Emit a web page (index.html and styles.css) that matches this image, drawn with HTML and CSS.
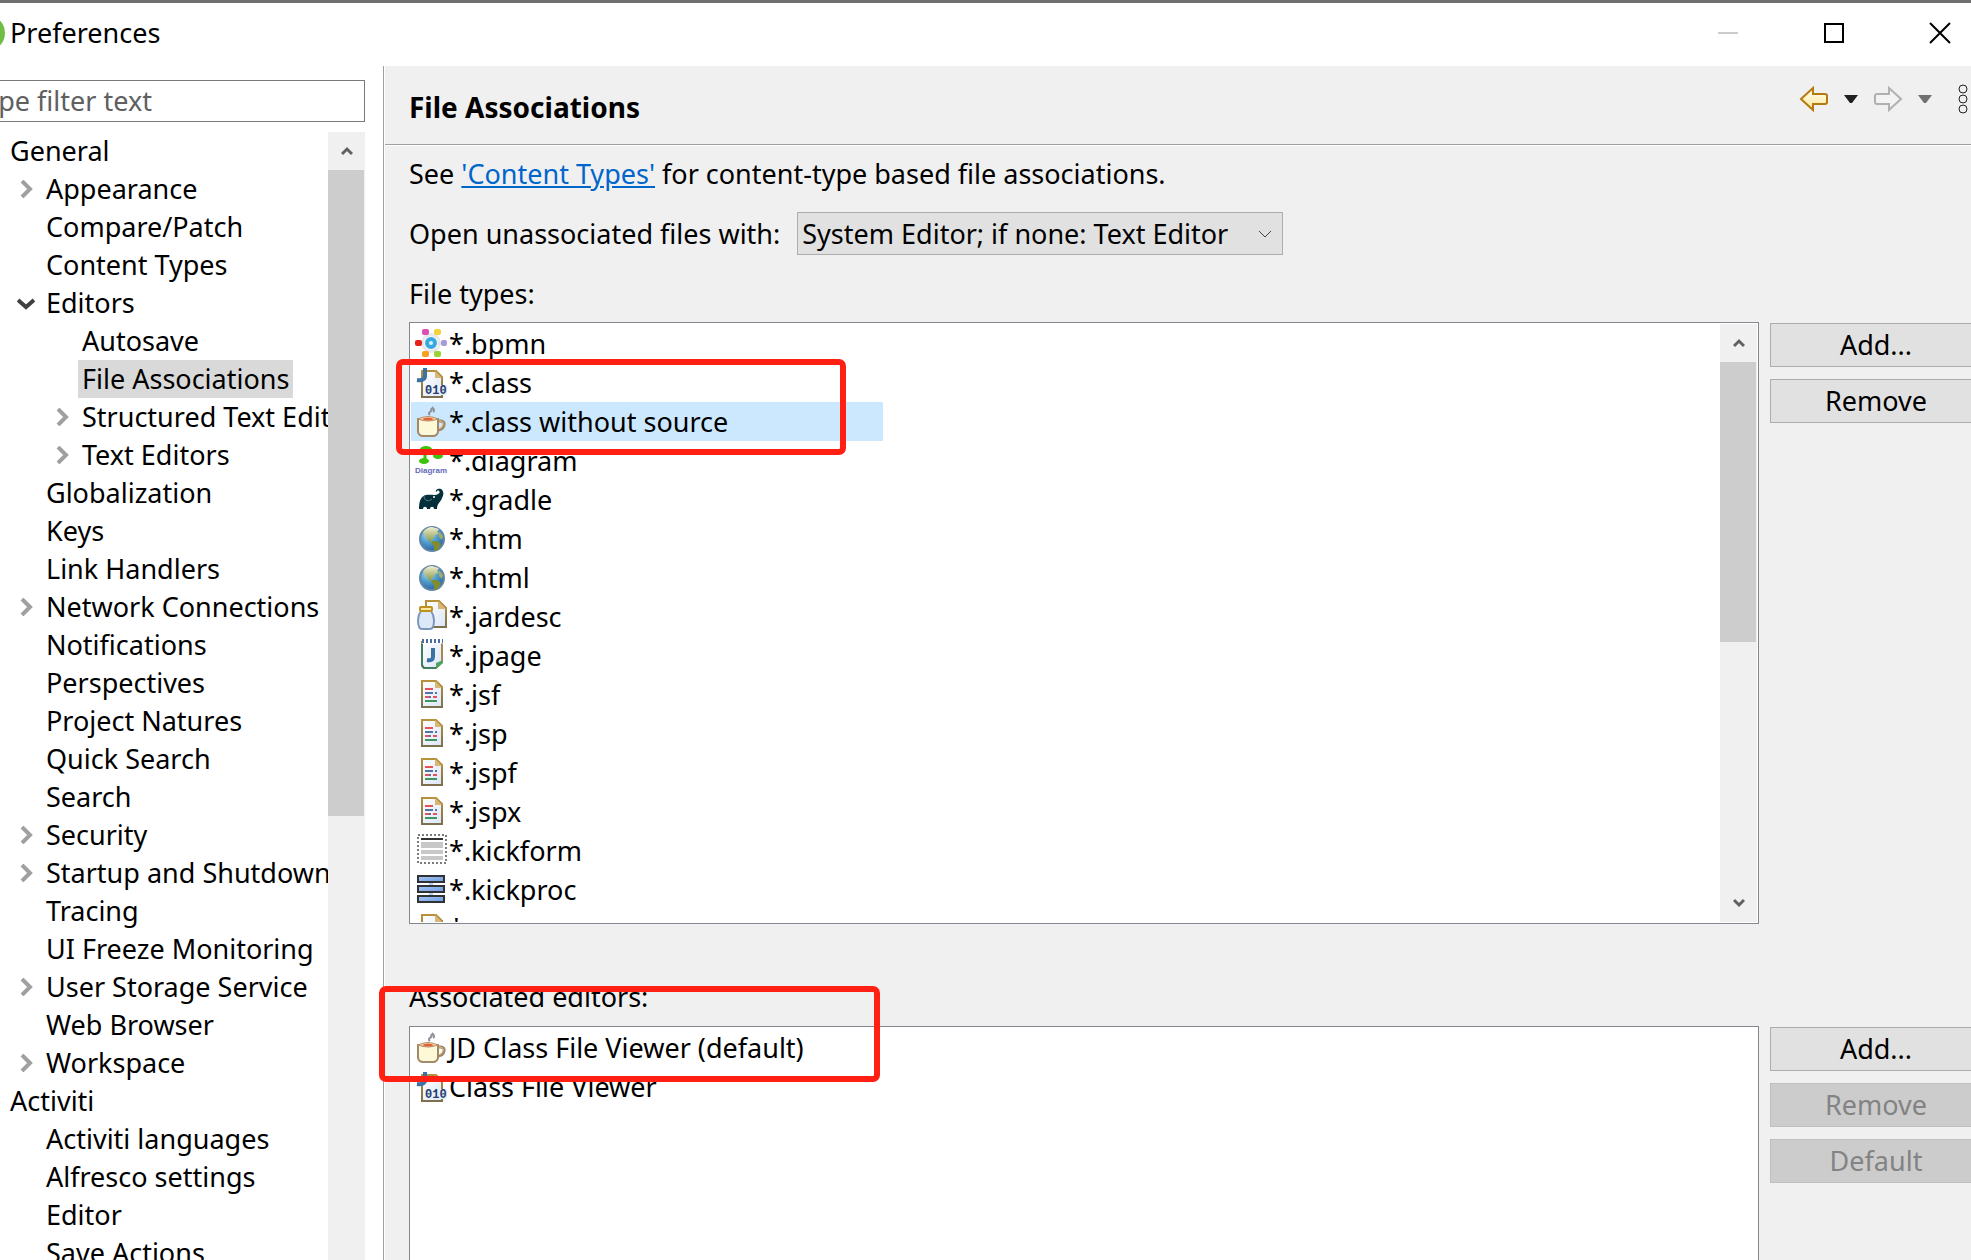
FILE: index.html
```html
<!DOCTYPE html>
<html lang="en">
<head>
  <meta charset="UTF-8">
  <title>Preferences</title>
  <link rel="stylesheet" href="styles.css">
</head>
<body>

<!-- Icons used by the lists -->
<svg class="sprite" width="0" height="0" aria-hidden="true">
  <defs>
    <linearGradient id="pageFill" x1="0" y1="0" x2="1" y2="1">
      <stop offset="0" stop-color="#ffffff"/><stop offset="1" stop-color="#dbe6f8"/>
    </linearGradient>
    <linearGradient id="pageEdge" x1="0" y1="0" x2="0" y2="1">
      <stop offset="0" stop-color="#b8923a"/><stop offset="1" stop-color="#7c704e"/>
    </linearGradient>
    <radialGradient id="sea" cx="0.35" cy="0.25" r="0.8">
      <stop offset="0" stop-color="#bfe3ee"/><stop offset="0.5" stop-color="#4f9fd0"/><stop offset="1" stop-color="#2b5d9c"/>
    </radialGradient>
    <linearGradient id="land" x1="0" y1="0" x2="0" y2="1">
      <stop offset="0" stop-color="#eeeed2"/><stop offset="1" stop-color="#7d8a2c"/>
    </linearGradient>
    <linearGradient id="backFill" x1="0" y1="0" x2="0" y2="1">
      <stop offset="0" stop-color="#fffdf0"/><stop offset="1" stop-color="#fde79a"/>
    </linearGradient>
    <linearGradient id="barFill" x1="0" y1="0" x2="1" y2="1">
      <stop offset="0" stop-color="#a9c6f2"/><stop offset="1" stop-color="#6c9ce0"/>
    </linearGradient>
  </defs>

  <symbol id="i-bpmn" viewBox="0 0 30 30" overflow="visible">
    <circle cx="14" cy="14" r="10" fill="#e9e9ec"/>
    <path d="M0 14h28M8 4l12 21M20 4L8 25" stroke="#e4e4e8" stroke-width="3"/>
    <circle cx="14" cy="14" r="7" fill="#f4f8fa"/>
    <circle cx="14" cy="14" r="4" fill="#d9f3fd" stroke="#35a9e0" stroke-width="4"/>
    <rect x="5" y="0" width="7" height="6" rx="2" fill="#dd4fb4"/>
    <rect x="17" y="0" width="7" height="6" rx="2" fill="#f3d23a"/>
    <rect x="-2" y="11" width="7" height="6" rx="2" fill="#e8201c"/>
    <rect x="24" y="11" width="6" height="6" rx="2" fill="#a69bd8"/>
    <rect x="5" y="22" width="7" height="6" rx="2" fill="#f9a01e"/>
    <rect x="17" y="22" width="7" height="6" rx="2" fill="#9bd335"/>
  </symbol>

  <symbol id="i-class" viewBox="0 0 30 30" overflow="visible">
    <path d="M5 3h14l6 6v20H5z" fill="url(#pageFill)" stroke="url(#pageEdge)" stroke-width="2"/>
    <path d="M18 3v7h7z" fill="#d9b877"/>
    <rect x="8" y="17" width="22" height="10" fill="#eaf0fa"/>
    <path d="M8 0v8q0 5-8 4" fill="none" stroke="#3a72a6" stroke-width="4"/>
    <text x="8" y="26" class="icon-bits">010</text>
  </symbol>

  <symbol id="i-cup" viewBox="0 0 30 30" overflow="visible">
    <path d="M13 8c-4-3 4-3 1-7M16 5c2-1 1-3-1-5" fill="none" stroke="#8e949b" stroke-width="2"/>
    <path d="M20 14h4q4 1 3 4-1 5-7 5" fill="none" stroke="#9c8668" stroke-width="3"/>
    <path d="M20 14h4q3 1 2 4-1 4-6 4" fill="none" stroke="#e6c08c" stroke-width="1"/>
    <path d="M1 12v13q1 4 5 4h10q4 0 5-4V12z" fill="#fdf8d8" stroke="#a08a68" stroke-width="2"/>
    <path d="M1 12q10-5 20 0-10 4-20 0z" fill="#f8dcb4" stroke="#b99068"/>
    <path d="M5 12q6-3 12 0-6 3-12 0z" fill="#e0623a"/>
  </symbol>

  <symbol id="i-diagram" viewBox="0 0 30 30" overflow="visible">
    <path d="M8 3v12M10 4l10 5" stroke="#3cc40a" stroke-width="3"/>
    <ellipse cx="9" cy="3" rx="6" ry="3" fill="#3cc40a"/>
    <ellipse cx="7" cy="15" rx="5" ry="3" fill="#3cc40a"/>
    <ellipse cx="21" cy="10" rx="5" ry="3" fill="#3cc40a"/>
    <text x="-2" y="27" class="icon-caption">Diagram</text>
  </symbol>

  <symbol id="i-gradle" viewBox="0 0 30 30" overflow="visible">
    <path d="M2 24c0-8 2-13 7-14 4-1 9 1 12-1 2-1 2-2 1-3-1-1-2 0-3 1-1-2 2-4 5-3 3 2 3 6 1 9-1 4-5 5-5 11h-3c0-3-4-3-4 0h-3c0-3-4-3-4 0z" fill="#02303a"/>
    <path d="M7 11c0 5 5 6 8 3" fill="none" stroke="#5d7c84"/>
    <circle cx="17" cy="12" r="1" fill="#ffffff"/>
  </symbol>

  <symbol id="i-globe" viewBox="0 0 30 30" overflow="visible">
    <circle cx="15" cy="15" r="12" fill="url(#sea)" stroke="#5f86a8" stroke-width="2"/>
    <path d="M6 8q4-5 9-5l7 2-2 3 2 2-4 1-2 4-2 0 1 3 2 1-1 1-5-4-3-5z" fill="url(#land)"/>
    <path d="M15 17l5 0 4 3-2 4-3 3-2-1 0-4-2-2z" fill="#7f8c30"/>
    <path d="M22 7l4 5-1 4-3-3z" fill="#a5ad63"/>
  </symbol>

  <symbol id="i-jar" viewBox="0 0 30 30" overflow="visible">
    <path d="M9-1h13l7 7v19H9z" fill="url(#pageFill)" stroke="url(#pageEdge)" stroke-width="2"/>
    <path d="M21-1v8h8z" fill="#d9b877"/>
    <path d="M4 9q-3 4-3 9 0 9 4 9h8q4 0 4-9 0-5-3-9z" fill="#dce8f8" stroke="#7c95bd" stroke-width="2"/>
    <rect x="3" y="5" width="12" height="4" rx="1" fill="#fbe79a" stroke="#bd9120" stroke-width="2"/>
  </symbol>

  <symbol id="i-jpage" viewBox="0 0 30 30" overflow="visible">
    <path d="M5 1h20v20l-6 6H7l-2-2z" fill="url(#pageFill)" stroke="#a8894a" stroke-width="2"/>
    <path d="M5 3v21l2 3h12" fill="none" stroke="#3f7f5d" stroke-width="2"/>
    <path d="M26 19v3l-7 6v-6z" fill="#4ea262"/>
    <path d="M5 0h21" stroke="#ffffff" stroke-width="5"/>
    <path d="M5 0h21" stroke="#4c6b9e" stroke-width="4" stroke-dasharray="2 2"/>
    <path d="M16 7v9q0 4-6 3" fill="none" stroke="#3a72a6" stroke-width="4"/>
  </symbol>

  <symbol id="i-page" viewBox="0 0 30 30" overflow="visible">
    <path d="M5 1h14l6 6v20H5z" fill="url(#pageFill)" stroke="url(#pageEdge)" stroke-width="2"/>
    <path d="M18 1v7h7z" fill="#d9b877"/>
    <path d="M8 9h8M8 17h4M16 17h4" stroke="#e8505a" stroke-width="2"/>
    <path d="M8 13h8M18 13h2M12 17h2" stroke="#5573a8" stroke-width="2"/>
    <path d="M8 21h12" stroke="#3f9560" stroke-width="2"/>
  </symbol>

  <symbol id="i-form" viewBox="0 0 30 30" overflow="visible">
    <rect x="1" y="-1" width="28" height="28" fill="none" stroke="#7c7c7c" stroke-width="2" stroke-dasharray="2 2"/>
    <path d="M4 3h22" stroke="#333333" stroke-width="2"/>
    <path d="M4 6h22v6H4zM4 14h22v4H4zM4 20h22v4H4z" fill="#c8c8c8"/>
  </symbol>

  <symbol id="i-proc" viewBox="0 0 30 30" overflow="visible">
    <path d="M14 6v16" stroke="#b9d0f2" stroke-width="4"/>
    <g fill="url(#barFill)" stroke="#303236" stroke-width="2">
      <rect x="1" y="1" width="26" height="6"/>
      <rect x="1" y="11" width="26" height="6"/>
      <rect x="1" y="21" width="26" height="6"/>
    </g>
  </symbol>

  <symbol id="i-closed" viewBox="0 0 18 18">
    <path d="M5 1l8 8-8 8" fill="none" stroke="#a0a0a0" stroke-width="4"/>
  </symbol>
  <symbol id="i-open" viewBox="0 0 18 18">
    <path d="M1 6l8 7 8-7" fill="none" stroke="#404040" stroke-width="4"/>
  </symbol>
  <symbol id="i-up" viewBox="0 0 12 10">
    <path d="M1 8l5-5 5 5" fill="none" stroke="#606060" stroke-width="3"/>
  </symbol>
  <symbol id="i-down" viewBox="0 0 12 10">
    <path d="M1 2l5 5 5-5" fill="none" stroke="#606060" stroke-width="3"/>
  </symbol>
</svg>

<div class="window">
  <header class="titlebar">
    <span class="app-icon"></span>
    <span class="title">Preferences</span>
    <button class="win-btn" aria-label="Minimize"><svg width="22" height="22"><path d="M1 11h20" stroke="#cccccc" stroke-width="2"/></svg></button>
    <button class="win-btn" aria-label="Maximize"><svg width="22" height="22"><rect x="2" y="2" width="18" height="18" fill="none" stroke="#000000" stroke-width="2"/></svg></button>
    <button class="win-btn" aria-label="Close"><svg width="22" height="22"><path d="M1 1l20 20M21 1L1 21" stroke="#000000" stroke-width="2"/></svg></button>
  </header>

  <div class="body">
    <!-- Page tree -->
    <nav class="sidebar">
      <input class="filter" type="text" placeholder="Type filter text" aria-label="Type filter text">
      <div class="tree-pane">
        <ul class="tree">
          <li class="lvl0"><span>General</span></li>
          <li class="lvl1"><svg class="twisty"><use href="#i-closed"/></svg><span>Appearance</span></li>
          <li class="lvl1"><span>Compare/Patch</span></li>
          <li class="lvl1"><span>Content Types</span></li>
          <li class="lvl1"><svg class="twisty"><use href="#i-open"/></svg><span>Editors</span></li>
          <li class="lvl2"><span>Autosave</span></li>
          <li class="lvl2"><span class="current">File Associations</span></li>
          <li class="lvl2"><svg class="twisty"><use href="#i-closed"/></svg><span>Structured Text Editors</span></li>
          <li class="lvl2"><svg class="twisty"><use href="#i-closed"/></svg><span>Text Editors</span></li>
          <li class="lvl1"><span>Globalization</span></li>
          <li class="lvl1"><span>Keys</span></li>
          <li class="lvl1"><span>Link Handlers</span></li>
          <li class="lvl1"><svg class="twisty"><use href="#i-closed"/></svg><span>Network Connections</span></li>
          <li class="lvl1"><span>Notifications</span></li>
          <li class="lvl1"><span>Perspectives</span></li>
          <li class="lvl1"><span>Project Natures</span></li>
          <li class="lvl1"><span>Quick Search</span></li>
          <li class="lvl1"><span>Search</span></li>
          <li class="lvl1"><svg class="twisty"><use href="#i-closed"/></svg><span>Security</span></li>
          <li class="lvl1"><svg class="twisty"><use href="#i-closed"/></svg><span>Startup and Shutdown</span></li>
          <li class="lvl1"><span>Tracing</span></li>
          <li class="lvl1"><span>UI Freeze Monitoring</span></li>
          <li class="lvl1"><svg class="twisty"><use href="#i-closed"/></svg><span>User Storage Service</span></li>
          <li class="lvl1"><span>Web Browser</span></li>
          <li class="lvl1"><svg class="twisty"><use href="#i-closed"/></svg><span>Workspace</span></li>
          <li class="lvl0"><span>Activiti</span></li>
          <li class="lvl1"><span>Activiti languages</span></li>
          <li class="lvl1"><span>Alfresco settings</span></li>
          <li class="lvl1"><span>Editor</span></li>
          <li class="lvl1"><span>Save Actions</span></li>
        </ul>
        <div class="scrollbar">
          <button class="scroll-btn" aria-label="Scroll up"><svg width="12" height="10"><use href="#i-up"/></svg></button>
          <div class="thumb thumb-tree"></div>
        </div>
      </div>
    </nav>

    <main class="page">
      <div class="page-head">
        <h1>File Associations</h1>
        <div class="history">
          <button class="tool" aria-label="Back"><svg width="30" height="26"><path d="M2 13L14 2v6h12q2 0 2 2v6q0 2-2 2H14v6z" fill="url(#backFill)" stroke="#b5790f" stroke-width="2"/></svg></button>
          <button class="tool" aria-label="Back history"><svg width="14" height="8"><path d="M0 0h14l-6 8h-2z" fill="#202020"/></svg></button>
          <button class="tool" aria-label="Forward"><svg width="30" height="26"><path d="M28 13L16 2v6H4q-2 0-2 2v6q0 2 2 2h12v6z" fill="#f3f3f3" stroke="#b0b0b0" stroke-width="2"/></svg></button>
          <button class="tool" aria-label="Forward history"><svg width="14" height="8"><path d="M0 0h14l-6 8h-2z" fill="#707070"/></svg></button>
          <button class="tool" aria-label="View menu"><svg width="10" height="30" fill="none" stroke="#202020" stroke-width="1"><circle cx="5" cy="5" r="4"/><circle cx="5" cy="15" r="4"/><circle cx="5" cy="25" r="4"/></svg></button>
        </div>
      </div>

      <div class="page-body">
        <p class="line intro">See <a href="#content-types">'Content Types'</a> for content-type based file associations.</p>
        <div class="line open-with">
          <label for="openWith">Open unassociated files with:</label>
          <div class="combo">
            <select id="openWith">
              <option>System Editor; if none: Text Editor</option>
            </select>
            <svg class="combo-arrow" width="14" height="8"><path d="M1 1l6 6 6-6" fill="none" stroke="#404040"/></svg>
          </div>
        </div>
        <div class="line caption" id="typesLabel">File types:</div>

        <div class="columns types">
          <div class="list-box">
            <ul class="list" aria-labelledby="typesLabel">
              <li><svg class="icon"><use href="#i-bpmn"/></svg>*.bpmn</li>
              <li><svg class="icon"><use href="#i-class"/></svg>*.class</li>
              <li class="selected"><svg class="icon"><use href="#i-cup"/></svg>*.class without source</li>
              <li><svg class="icon"><use href="#i-diagram"/></svg>*.diagram</li>
              <li><svg class="icon"><use href="#i-gradle"/></svg>*.gradle</li>
              <li><svg class="icon"><use href="#i-globe"/></svg>*.htm</li>
              <li><svg class="icon"><use href="#i-globe"/></svg>*.html</li>
              <li><svg class="icon"><use href="#i-jar"/></svg>*.jardesc</li>
              <li><svg class="icon"><use href="#i-jpage"/></svg>*.jpage</li>
              <li><svg class="icon"><use href="#i-page"/></svg>*.jsf</li>
              <li><svg class="icon"><use href="#i-page"/></svg>*.jsp</li>
              <li><svg class="icon"><use href="#i-page"/></svg>*.jspf</li>
              <li><svg class="icon"><use href="#i-page"/></svg>*.jspx</li>
              <li><svg class="icon"><use href="#i-form"/></svg>*.kickform</li>
              <li><svg class="icon"><use href="#i-proc"/></svg>*.kickproc</li>
              <li><svg class="icon"><use href="#i-page"/></svg>*.map</li>
            </ul>
            <div class="scrollbar">
              <button class="scroll-btn" aria-label="Scroll up"><svg width="12" height="10"><use href="#i-up"/></svg></button>
              <div class="thumb thumb-list"></div>
              <button class="scroll-btn scroll-end" aria-label="Scroll down"><svg width="12" height="10"><use href="#i-down"/></svg></button>
            </div>
          </div>
          <div class="buttons">
            <button class="btn">Add...</button>
            <button class="btn">Remove</button>
          </div>
          <div class="mark mark-types"></div>
        </div>

        <div class="line editors-caption" id="editorsLabel">Associated editors:</div>
        <div class="columns editors">
          <div class="list-box">
            <ul class="list" aria-labelledby="editorsLabel">
              <li><svg class="icon"><use href="#i-cup"/></svg>JD Class File Viewer (default)</li>
              <li><svg class="icon"><use href="#i-class"/></svg>Class File Viewer</li>
            </ul>
          </div>
          <div class="buttons">
            <button class="btn">Add...</button>
            <button class="btn" disabled>Remove</button>
            <button class="btn" disabled>Default</button>
          </div>
          <div class="mark mark-editors"></div>
        </div>
      </div>
    </main>
  </div>
</div>

</body>
</html>
```
FILE: styles.css
```css
* {
  box-sizing: border-box;
}

html, body {
  height: 100%;
  margin: 0;
  overflow: hidden;
}

body, button, input, select {
  font-family: "Noto Sans", "Open Sans", sans-serif;
  font-size: 27px;
  color: #000;
}

button {
  border: none;
  background: none;
  padding: 0;
}

ul {
  list-style: none;
  margin: 0;
  padding: 0;
}

.sprite {
  position: absolute;
}

.window {
  display: flex;
  flex-direction: column;
  height: 100%;
  background: #fff;
}

/* Title bar */
.titlebar {
  display: flex;
  align-items: center;
  flex: none;
  height: 66px;
  padding-bottom: 4px;
  border-top: 3px solid #6e706f;
}

.app-icon {
  flex: none;
  width: 36px;
  height: 36px;
  margin-left: -31px;
  border-radius: 50%;
  background: #6fbd45;
}

.title {
  flex: 1;
  margin-left: 5px;
}

.win-btn {
  display: flex;
  justify-content: center;
  width: 106px;
}

.win-btn:last-child {
  margin-right: -22px;
}

.body {
  display: flex;
  flex: 1;
  min-height: 0;
}

/* Sidebar */
.sidebar {
  display: flex;
  flex-direction: column;
  flex: none;
  width: 384px;
  padding: 14px 18px 0 0;
  border-right: 1px solid #a0a0a0;
}

.filter {
  flex: none;
  height: 42px;
  margin-left: -37px;
  padding: 0 6px 2px;
  border: 1px solid #7a7a7a;
  outline: none;
}

.filter::placeholder {
  color: #606060;
  opacity: 1;
}

.tree-pane {
  display: flex;
  flex: 1;
  min-height: 0;
  margin-top: 10px;
}

.tree {
  flex: 1;
  min-width: 0;
  overflow: hidden;
}

.tree li {
  display: flex;
  align-items: center;
  height: 38px;
  line-height: 38px;
  white-space: nowrap;
}

.tree span {
  padding: 0 4px;
}

.lvl0 {
  padding-left: 6px;
}

.lvl1 {
  padding-left: 42px;
}

.lvl2 {
  padding-left: 78px;
}

.twisty {
  flex: none;
  width: 18px;
  height: 18px;
  margin-left: -25px;
  margin-right: 7px;
}

.tree .current {
  background: #d9d9d9;
}

/* Scroll bars */
.scrollbar {
  display: flex;
  flex-direction: column;
  flex: none;
  width: 37px;
  background: #f0f0f0;
}

.scroll-btn {
  display: flex;
  align-items: center;
  justify-content: center;
  flex: none;
  height: 38px;
}

.scroll-end {
  margin-top: auto;
}

.thumb {
  width: 36px;
  background: #cdcdcd;
}

.thumb-tree {
  height: 646px;
}

.thumb-list {
  height: 280px;
}

/* Preference page */
.page {
  display: flex;
  flex-direction: column;
  flex: 1;
  min-width: 0;
  border-left: 1px solid #fff;
  background: #f0f0f0;
}

.page-head {
  display: flex;
  align-items: center;
  justify-content: space-between;
  flex: none;
  height: 79px;
  padding: 4px 3px 0 24px;
  border-bottom: 1px solid #a0a0a0;
  box-shadow: 0 1px #fff;
}

h1 {
  margin: 0;
  font-size: 28px;
}

.history {
  display: flex;
  align-items: center;
  gap: 15px;
  height: 30px;
  margin-bottom: 16px;
}

.tool {
  display: flex;
}

.tool:last-child {
  margin-left: 11px;
}

.page-body {
  display: flex;
  flex-direction: column;
  flex: 1;
  min-height: 0;
  padding: 7px 0 0 24px;
}

.line {
  flex: none;
  margin: 0;
  height: 43px;
  line-height: 43px;
}

.intro a {
  color: #0066cc;
  text-underline-offset: 2px;
}

.open-with {
  display: flex;
  gap: 17px;
  margin-top: 17px;
}

.combo {
  position: relative;
}

.combo select {
  display: block;
  width: 486px;
  height: 43px;
  padding: 0 32px 0 4px;
  border: 1px solid #adadad;
  border-radius: 0;
  background: #e1e1e1;
  appearance: none;
}

.combo-arrow {
  position: absolute;
  right: 11px;
  top: 18px;
  pointer-events: none;
}

.caption {
  margin-top: 17px;
}

.columns {
  display: flex;
  position: relative;
  gap: 11px;
}

.types {
  height: 602px;
  margin-top: 7px;
}

.editors {
  flex: 1;
  min-height: 0;
  margin-top: 8px;
}

.editors-caption {
  margin-top: 51px;
}

/* List boxes */
.list-box {
  display: flex;
  flex: 1;
  min-width: 0;
  padding: 1px;
  border: 1px solid #828790;
  background: #fff;
}

.editors .list-box {
  border-bottom: none;
}

.list {
  flex: 1;
  min-width: 0;
  overflow: hidden;
}

.list li {
  display: flex;
  align-items: center;
  gap: 2px;
  width: 472px;
  height: 39px;
  padding-left: 6px;
  white-space: nowrap;
}

.list .selected {
  background: #cce8ff;
}

.icon {
  flex: none;
  width: 30px;
  height: 30px;
  overflow: visible;
}

.icon-bits {
  font: bold 12px "Liberation Mono", monospace;
  fill: #1f3a6e;
}

.icon-caption {
  font: bold 8px "Liberation Sans", sans-serif;
  fill: #6468b8;
}

/* The last column runs past the right edge of the window */
.buttons {
  display: flex;
  flex-direction: column;
  flex: none;
  gap: 12px;
  width: 212px;
  margin-right: -11px;
  padding-top: 1px;
}

.btn {
  height: 44px;
  line-height: 42px;
  border: 1px solid #adadad;
  background: #e1e1e1;
}

.btn:disabled {
  border-color: #bfbfbf;
  background: #cccccc;
  color: #838383;
}

/* Red highlight frames */
.mark {
  position: absolute;
  height: 96px;
  border: 6px solid #ff2013;
  border-radius: 7px;
  pointer-events: none;
}

.mark-types {
  left: -13px;
  top: 37px;
  width: 450px;
}

.mark-editors {
  left: -30px;
  top: -40px;
  width: 501px;
}
```
